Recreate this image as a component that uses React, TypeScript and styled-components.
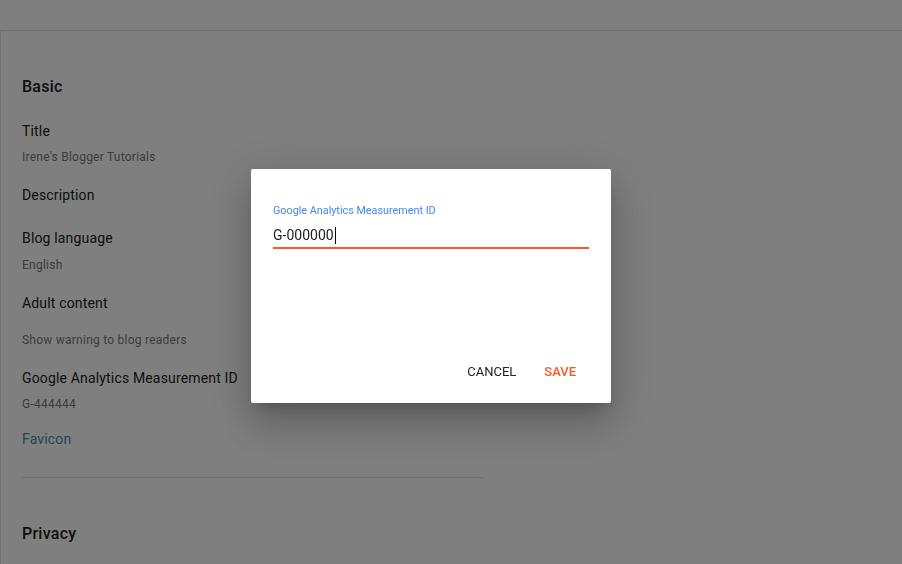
import styled, { createGlobalStyle } from 'styled-components';

const GlobalStyle = createGlobalStyle`
  * { box-sizing: border-box; }
  html, body { margin: 0; padding: 0; }
  body {
    background: #ffffff;
    font-family: Roboto, "Liberation Sans", Arial, sans-serif;
    color: #212121;
    overflow: hidden;
  }
`;

type TSetting = {
  title: string;
  value?: string;
  link?: boolean;
  top?: number;
  bottom?: number;
  valueGap?: number;
};

const basicSettings: TSetting[] = [
  { title: 'Title', value: "Irene's Blogger Tutorials" },
  { title: 'Description', bottom: 13 },
  { title: 'Blog language', value: 'English', valueGap: 9 },
  { title: 'Adult content', value: 'Show warning to blog readers', valueGap: 19 },
  { title: 'Google Analytics Measurement ID', value: 'G-444444' },
  { title: 'Favicon', link: true, top: 7 },
];

export default function App() {
  return (
    <>
      <GlobalStyle />
      <Page>
        <TopBar />
        <Panel>
          <Section>
            <SectionTitle>Basic</SectionTitle>
            {basicSettings.map(s => (
              <Setting key={s.title} $top={s.top ?? 10} $bottom={s.bottom ?? 10}>
                <SettingTitle $link={!!s.link}>{s.title}</SettingTitle>
                {s.value && <SettingValue $gap={s.valueGap ?? 8}>{s.value}</SettingValue>}
              </Setting>
            ))}
          </Section>
          <Divider />
          <Section>
            <PrivacyTitle>Privacy</PrivacyTitle>
          </Section>
        </Panel>
      </Page>
      <Overlay>
        <Dialog>
          <Field>
            <FieldLabel>Google Analytics Measurement ID</FieldLabel>
            <FieldInput>
              G-000000
              <Caret />
            </FieldInput>
          </Field>
          <Actions>
            <ActionButton>CANCEL</ActionButton>
            <ActionButton $primary>SAVE</ActionButton>
          </Actions>
        </Dialog>
      </Overlay>
    </>
  );
}

const Page = styled.div`
  width: 902px;
  height: 564px;
  display: flex;
  flex-direction: column;
`;

const TopBar = styled.div`
  height: 31px;
  flex: none;
  background: #ffffff;
  border-bottom: 1px solid #e0e0e0;
`;

const Panel = styled.div`
  flex: 1;
  border-left: 1px solid #e0e0e0;
  padding: 44px 0 0 21px;
`;

const Section = styled.div`
  width: 461px;
  display: flex;
  flex-direction: column;
`;

const SectionTitle = styled.h2`
  margin: 0 0 12px;
  font-size: 16px;
  font-weight: 500;
  line-height: 24px;
  color: #212121;
  letter-spacing: 0.25px;
`;

const PrivacyTitle = styled(SectionTitle)`
  margin: 0;
`;

const Setting = styled.div<{ $top: number; $bottom: number }>`
  display: flex;
  flex-direction: column;
  padding: ${({ $top, $bottom }) => `${$top}px 0 ${$bottom}px`};
`;

const SettingTitle = styled.div<{ $link: boolean }>`
  font-size: 14px;
  line-height: 20px;
  letter-spacing: 0.16px;
  color: ${({ $link }) => ($link ? '#39939f' : '#212121')};
`;

const SettingValue = styled.div<{ $gap: number }>`
  margin-top: ${({ $gap }) => `${$gap}px`};
  font-size: 12px;
  line-height: 16px;
  letter-spacing: 0.24px;
  color: #777777;
`;

const Divider = styled.hr`
  width: 461px;
  margin: 18px 0 44px;
  border: none;
  border-top: 1px solid #e0e0e0;
`;

const Overlay = styled.div`
  position: fixed;
  inset: 0;
  background: rgba(0, 0, 0, 0.5);
  padding: 169px 0 0 251px;
`;

const Dialog = styled.div`
  width: 360px;
  height: 234px;
  background: #ffffff;
  border-radius: 2px;
  box-shadow: 0 11px 15px -7px rgba(0, 0, 0, 0.2), 0 24px 38px 3px rgba(0, 0, 0, 0.14),
    0 9px 46px 8px rgba(0, 0, 0, 0.12);
  padding: 35px 22px 0 22px;
  display: flex;
  flex-direction: column;
`;

const Field = styled.div`
  display: flex;
  flex-direction: column;
`;

const FieldLabel = styled.label`
  font-size: 10.8px;
  line-height: 14px;
  color: #4285f4;
`;

const FieldInput = styled.div`
  display: flex;
  align-items: center;
  margin-top: 7px;
  height: 24px;
  font-size: 14px;
  color: #212121;
  border-bottom: 2px solid #ff5722;
  padding-bottom: 2px;
`;

const Caret = styled.span`
  display: inline-block;
  width: 1px;
  height: 17px;
  margin-left: 1px;
  background: #000000;
`;

const Actions = styled.div`
  margin-top: auto;
  height: 50px;
  display: flex;
  justify-content: flex-end;
  align-items: flex-start;
  gap: 4px;
  padding-right: 1px;
`;

const ActionButton = styled.button<{ $primary?: boolean }>`
  height: 36px;
  padding: 0 12px;
  border: none;
  background: transparent;
  font-family: Roboto, "Liberation Sans", Arial, sans-serif;
  font-size: 13px;
  font-weight: ${({ $primary }) => ($primary ? 500 : 400)};
  letter-spacing: 0;
  color: ${({ $primary }) => ($primary ? '#ff5722' : '#212121')};
`;
